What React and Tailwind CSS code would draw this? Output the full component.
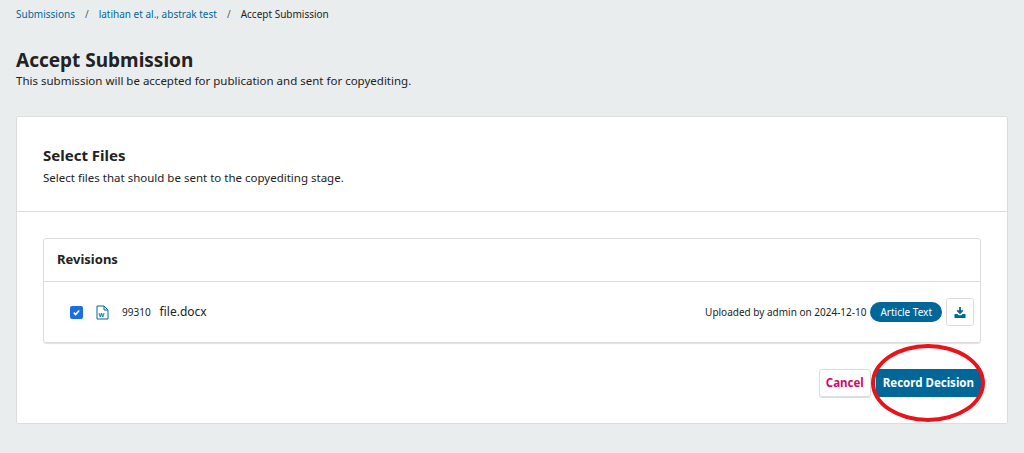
export default function App() {
  return (
    <div className="min-h-[453px] bg-[#eaedee] text-[#222] pb-[27px]" style={{ fontFamily: '"Noto Sans", sans-serif' }}>
      <div className="px-4 h-[28px] flex items-center gap-[10px] text-[10px]">
        <span className="text-[#006798]">Submissions</span>
        <span className="text-[#555]">/</span>
        <span className="text-[#006798]">latihan et al., abstrak test</span>
        <span className="text-[#555]">/</span>
        <span>Accept Submission</span>
      </div>
      <div className="px-4 pt-[19px]">
        <h1 className="text-[19px] font-bold leading-[26px]">Accept Submission</h1>
        <p className="text-[11.5px] leading-[16px]">This submission will be accepted for publication and sent for copyediting.</p>
      </div>
      <div className="mx-4 mt-[27px] bg-white border border-[#ddd] rounded-[2px]">
        <div className="px-[26px] pt-[27px] pb-[25px] border-b border-[#ddd]">
          <h2 className="text-[15px] font-bold leading-[22px]">Select Files</h2>
          <p className="text-[11.5px] leading-[16px] mt-[4px]">Select files that should be sent to the copyediting stage.</p>
        </div>
        <div className="px-[26px] pt-[26px]">
          <div className="border border-[#ddd] rounded-[3px] shadow-[0_1px_1px_rgba(0,0,0,0.12)]">
            <div className="h-[43px] px-[13px] flex items-center border-b border-[#ddd] text-[13px] font-bold">Revisions</div>
            <div className="h-[60px] flex items-center pl-[26px] pr-[6px]">
              <span className="w-[13px] h-[13px] rounded-[2px] bg-[#1a6fe0] flex items-center justify-center">
                <svg width="9" height="9" viewBox="0 0 10 10"><path d="M2 5.2l2 2 4-4.5" stroke="white" strokeWidth="1.8" fill="none"/></svg>
              </span>
              <svg className="ml-[13px]" width="13" height="15" viewBox="0 0 13 15">
                <path d="M1 1h7l4 4v9H1z" fill="none" stroke="#006798" strokeWidth="1"/>
                <path d="M8 1v4h4" fill="none" stroke="#006798" strokeWidth="1"/>
                <text x="2.5" y="12" fontSize="6" fill="#006798" fontWeight="bold">W</text>
              </svg>
              <span className="ml-[13px] text-[10px]">99310</span>
              <span className="ml-[9px] text-[12px]">file.docx</span>
              <span className="ml-auto text-[10px]">Uploaded by admin on 2024-12-10</span>
              <span className="ml-[4px] h-[20px] px-[10px] rounded-full bg-[#006798] text-white text-[10px] flex items-center">Article Text</span>
              <span className="ml-[4px] w-[28px] h-[28px] border border-[#ddd] rounded-[3px] flex items-center justify-center">
                <svg width="12" height="11" viewBox="0 0 12 11"><path d="M6 0v5.5M3.3 3.3L6 6l2.7-2.7" stroke="#006798" strokeWidth="1.8" fill="none"/><path d="M0.5 7h3l1 1.3h3l1-1.3h3V11H0.5z" fill="#006798"/></svg>
              </span>
            </div>
          </div>
        </div>
        <div className="flex justify-end gap-[5px] px-[26px] pt-[26px] pb-[26px]">
          <button className="h-[28px] px-[6px] border border-[#ddd] rounded-[3px] text-[#d00a6c] text-[11.5px] font-bold shadow-[0_1px_0_#ddd]">Cancel</button>
          <div className="relative">
            <button className="h-[28px] px-[7px] rounded-[3px] bg-[#006798] text-white text-[11.5px] font-bold">Record Decision</button>
            <div className="absolute left-[-5px] top-[-25px] w-[114px] h-[78px] rounded-[50%] border-[4px] border-[#e8141a]"></div>
          </div>
        </div>
      </div>
    </div>
  );
}
